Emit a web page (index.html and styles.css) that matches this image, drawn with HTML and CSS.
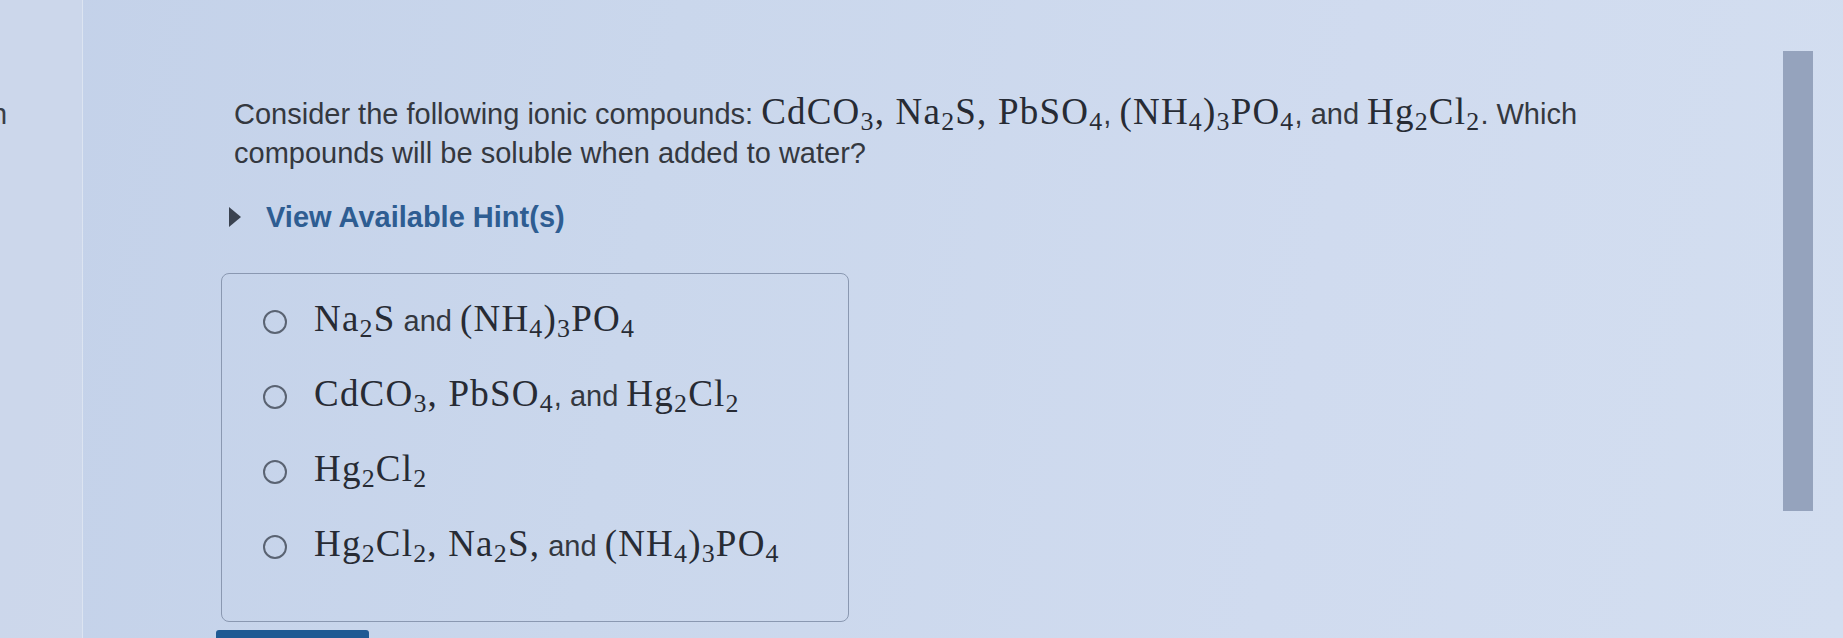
FILE: index.html
```html
<!DOCTYPE html>
<html lang="en">
<head>
<meta charset="utf-8">
<title>Question</title>
<link rel="stylesheet" href="styles.css">
</head>
<body>
<div class="page">
  <aside class="sidebar"><span class="cut">n</span></aside>
  <main class="main">
    <p class="question">Consider the following ionic compounds: <span class="m">CdCO<sub>3</sub>, Na<sub>2</sub>S, PbSO<sub>4</sub></span>, <span class="m">(NH<sub>4</sub>)<sub>3</sub>PO<sub>4</sub></span>, and <span class="m">Hg<sub>2</sub>Cl<sub>2</sub></span>. Which compounds will be soluble when added to water?</p>
    <div class="hint"><span class="tri"></span><span class="hint-text">View Available Hint(s)</span></div>
    <div class="box">
      <div class="opt"><span class="radio"></span><span class="label"><span class="m">Na<sub>2</sub>S</span> and <span class="m">(NH<sub>4</sub>)<sub>3</sub>PO<sub>4</sub></span></span></div>
      <div class="opt"><span class="radio"></span><span class="label"><span class="m">CdCO<sub>3</sub>, PbSO<sub>4</sub></span>, and <span class="m">Hg<sub>2</sub>Cl<sub>2</sub></span></span></div>
      <div class="opt"><span class="radio"></span><span class="label"><span class="m">Hg<sub>2</sub>Cl<sub>2</sub></span></span></div>
      <div class="opt"><span class="radio"></span><span class="label"><span class="m">Hg<sub>2</sub>Cl<sub>2</sub>, Na<sub>2</sub>S,</span> and <span class="m">(NH<sub>4</sub>)<sub>3</sub>PO<sub>4</sub></span></span></div>
    </div>
    <div class="submit"></div>
  </main>
  <div class="scrollbar"><div class="thumb"></div></div>
</div>
</body>
</html>
```
FILE: styles.css
```css
html, body {
  margin: 0;
  padding: 0;
}
body {
  width: 1843px;
  height: 638px;
  overflow: hidden;
  background: linear-gradient(100deg, #c3d1e9 0%, #cad7ec 35%, #d0dbef 70%, #d3def0 100%);
  font-family: "Liberation Sans", Arial, sans-serif;
  color: #34383f;
}
.page {
  display: flex;
  height: 638px;
  overflow: hidden;
}
.sidebar {
  width: 83px;
  flex: none;
  border-right: 1px solid #dce4f1;
  background: rgba(214, 222, 238, 0.45);
  overflow: hidden;
  padding-top: 95px;
  font-size: 29px;
  line-height: 39px;
  box-sizing: border-box;
}
.cut {
  display: inline-block;
  margin-left: -9px;
  color: #3a3e47;
}
.main {
  flex: 1;
  padding-left: 151px;
  padding-top: 95px;
  box-sizing: border-box;
}
.question {
  margin: 0;
  max-width: 1440px;
  font-size: 29px;
  line-height: 39px;
}
.m {
  font-family: "Liberation Serif", "Times New Roman", serif;
  font-size: 37px;
  letter-spacing: 1.2px;
  line-height: 0;
  color: #272b34;
}
.m sub {
  font-size: 0.7em;
  vertical-align: -0.25em;
  line-height: 0;
}
.hint {
  display: flex;
  align-items: center;
  margin-top: 26px;
  margin-left: -5px;
  height: 37px;
}
.tri {
  width: 0;
  height: 0;
  border-top: 10px solid transparent;
  border-bottom: 10px solid transparent;
  border-left: 12px solid #3a4250;
  margin-right: 25px;
  margin-top: -2px;
}
.hint-text {
  font-size: 29px;
  font-weight: bold;
  color: #2e5d92;
}
.box {
  margin-top: 37px;
  margin-left: -13px;
  width: 628px;
  height: 349px;
  box-sizing: border-box;
  border: 1.5px solid #8a98b1;
  border-radius: 8px;
  padding: 10px 0 0 41px;
}
.opt {
  display: flex;
  align-items: center;
  height: 75px;
}
.radio {
  width: 24px;
  height: 24px;
  box-sizing: border-box;
  border: 2px solid #5a6372;
  border-radius: 50%;
  flex: none;
  margin-right: 27px;
}
.label {
  font-size: 29px;
  line-height: 37px;
  white-space: nowrap;
}
.submit {
  margin-top: 8px;
  margin-left: -18px;
  width: 153px;
  height: 40px;
  background: #1f5a93;
  border-radius: 3px 3px 0 0;
}
.scrollbar {
  flex: none;
  width: 30px;
  margin-right: 30px;
  padding-top: 51px;
}
.thumb {
  width: 30px;
  height: 460px;
  background: #95a3bd;
}
```
